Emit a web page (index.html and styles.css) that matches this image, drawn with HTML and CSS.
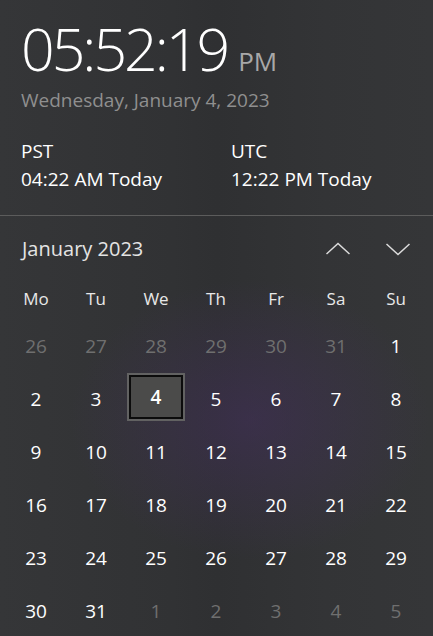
FILE: index.html
```html
<!DOCTYPE html>
<html lang="en">
<head>
    <meta charset="UTF-8">
    <meta name="viewport" content="width=device-width, initial-scale=1.0">
    <title>Clock and Calendar</title>
    <link rel="stylesheet" href="styles.css">
</head>
<body>
    <section class="clock">
        <div class="time">05:52:19<span class="ampm">PM</span></div>
        <div class="date">Wednesday, January 4, 2023</div>
        <div class="zones">
            <div class="zone">
                <div>PST</div>
                <div>04:22 AM Today</div>
            </div>
            <div class="zone">
                <div>UTC</div>
                <div>12:22 PM Today</div>
            </div>
        </div>
    </section>
    <div class="divider"></div>
    <section class="calendar">
        <div class="cal-header">
            <div class="month">January 2023</div>
            <div class="nav">
                <button class="nav-btn" aria-label="Previous month">
                    <svg width="24" height="14" viewBox="0 0 24 14" fill="none" stroke="currentColor" stroke-width="1.5">
                        <polyline points="0.5 12 12 1.5 23.5 12"></polyline>
                    </svg>
                </button>
                <button class="nav-btn" aria-label="Next month">
                    <svg width="24" height="14" viewBox="0 0 24 14" fill="none" stroke="currentColor" stroke-width="1.5">
                        <polyline points="0.5 2 12 12.5 23.5 2"></polyline>
                    </svg>
                </button>
            </div>
        </div>
        <div class="grid">
            <div class="dow">Mo</div>
            <div class="dow">Tu</div>
            <div class="dow">We</div>
            <div class="dow">Th</div>
            <div class="dow">Fr</div>
            <div class="dow">Sa</div>
            <div class="dow">Su</div>

            <div class="day other">26</div>
            <div class="day other">27</div>
            <div class="day other">28</div>
            <div class="day other">29</div>
            <div class="day other">30</div>
            <div class="day other">31</div>
            <div class="day">1</div>

            <div class="day">2</div>
            <div class="day">3</div>
            <div class="day"><span class="today">4</span></div>
            <div class="day">5</div>
            <div class="day">6</div>
            <div class="day">7</div>
            <div class="day">8</div>

            <div class="day">9</div>
            <div class="day">10</div>
            <div class="day">11</div>
            <div class="day">12</div>
            <div class="day">13</div>
            <div class="day">14</div>
            <div class="day">15</div>

            <div class="day">16</div>
            <div class="day">17</div>
            <div class="day">18</div>
            <div class="day">19</div>
            <div class="day">20</div>
            <div class="day">21</div>
            <div class="day">22</div>

            <div class="day">23</div>
            <div class="day">24</div>
            <div class="day">25</div>
            <div class="day">26</div>
            <div class="day">27</div>
            <div class="day">28</div>
            <div class="day">29</div>

            <div class="day">30</div>
            <div class="day">31</div>
            <div class="day other">1</div>
            <div class="day other">2</div>
            <div class="day other">3</div>
            <div class="day other">4</div>
            <div class="day other">5</div>
        </div>
    </section>
</body>
</html>
```

FILE: styles.css
```css
:root {
    --text: #ffffff;
    --text-dim: #8f8f8f;
    --text-other: #6f6f6f;
    --divider: #5c5c5c;
}
body {
    margin: 0;
    height: 636px;
    overflow: hidden;
    font-family: 'Open Sans', 'Noto Sans', sans-serif;
    color: var(--text);
    background:
        radial-gradient(ellipse 180px 140px at 250px 420px, rgba(72, 46, 104, 0.42), rgba(72, 46, 104, 0) 100%),
        linear-gradient(90deg, #353638 0%, #313234 40%, #2f3032 50%, #333436 75%, #353638 100%);
}
.clock {
    padding: 18px 21px 0;
}
.time {
    font-size: 59px;
    font-weight: 300;
    line-height: 60px;
    letter-spacing: -3px;
}
.ampm {
    font-size: 26px;
    font-weight: 400;
    line-height: 1;
    letter-spacing: 0;
    color: #a8a8a8;
    margin-left: 11px;
}
.date {
    margin-top: 10px;
    font-size: 19px;
    line-height: 24px;
    color: var(--text-dim);
}
.zones {
    display: grid;
    grid-template-columns: 210px auto;
    margin-top: 25px;
    font-size: 19px;
    line-height: 28px;
}
.divider {
    height: 1px;
    margin-top: 22px;
    background: var(--divider);
}
.cal-header {
    display: flex;
    justify-content: space-between;
    align-items: center;
    padding: 21px 0 0 22px;
}
.month {
    font-size: 20px;
    line-height: 24px;
    color: #e4e4e4;
}
.nav {
    display: flex;
    margin-right: 5px;
}
.nav-btn {
    width: 60px;
    height: 24px;
    padding: 0;
    border: none;
    background: none;
    color: #dcdcdc;
    display: flex;
    align-items: center;
    justify-content: center;
}
.grid {
    display: grid;
    grid-template-columns: repeat(7, 60px);
    grid-template-rows: 41px repeat(6, 53px);
    margin: 17px 0 0 6px;
}
.dow {
    display: flex;
    align-items: center;
    justify-content: center;
    font-size: 17px;
    color: #e8e8e8;
}
.day {
    display: flex;
    align-items: center;
    justify-content: center;
    font-size: 19px;
}
.day.other {
    color: var(--text-other);
}
.today {
    box-sizing: border-box;
    width: 54px;
    height: 44px;
    display: flex;
    align-items: center;
    justify-content: center;
    background: #4b4b4a;
    border: 2px solid #0c0c0c;
    outline: 2px solid #626262;
    font-weight: 600;
    margin-top: -3px;
}
```
